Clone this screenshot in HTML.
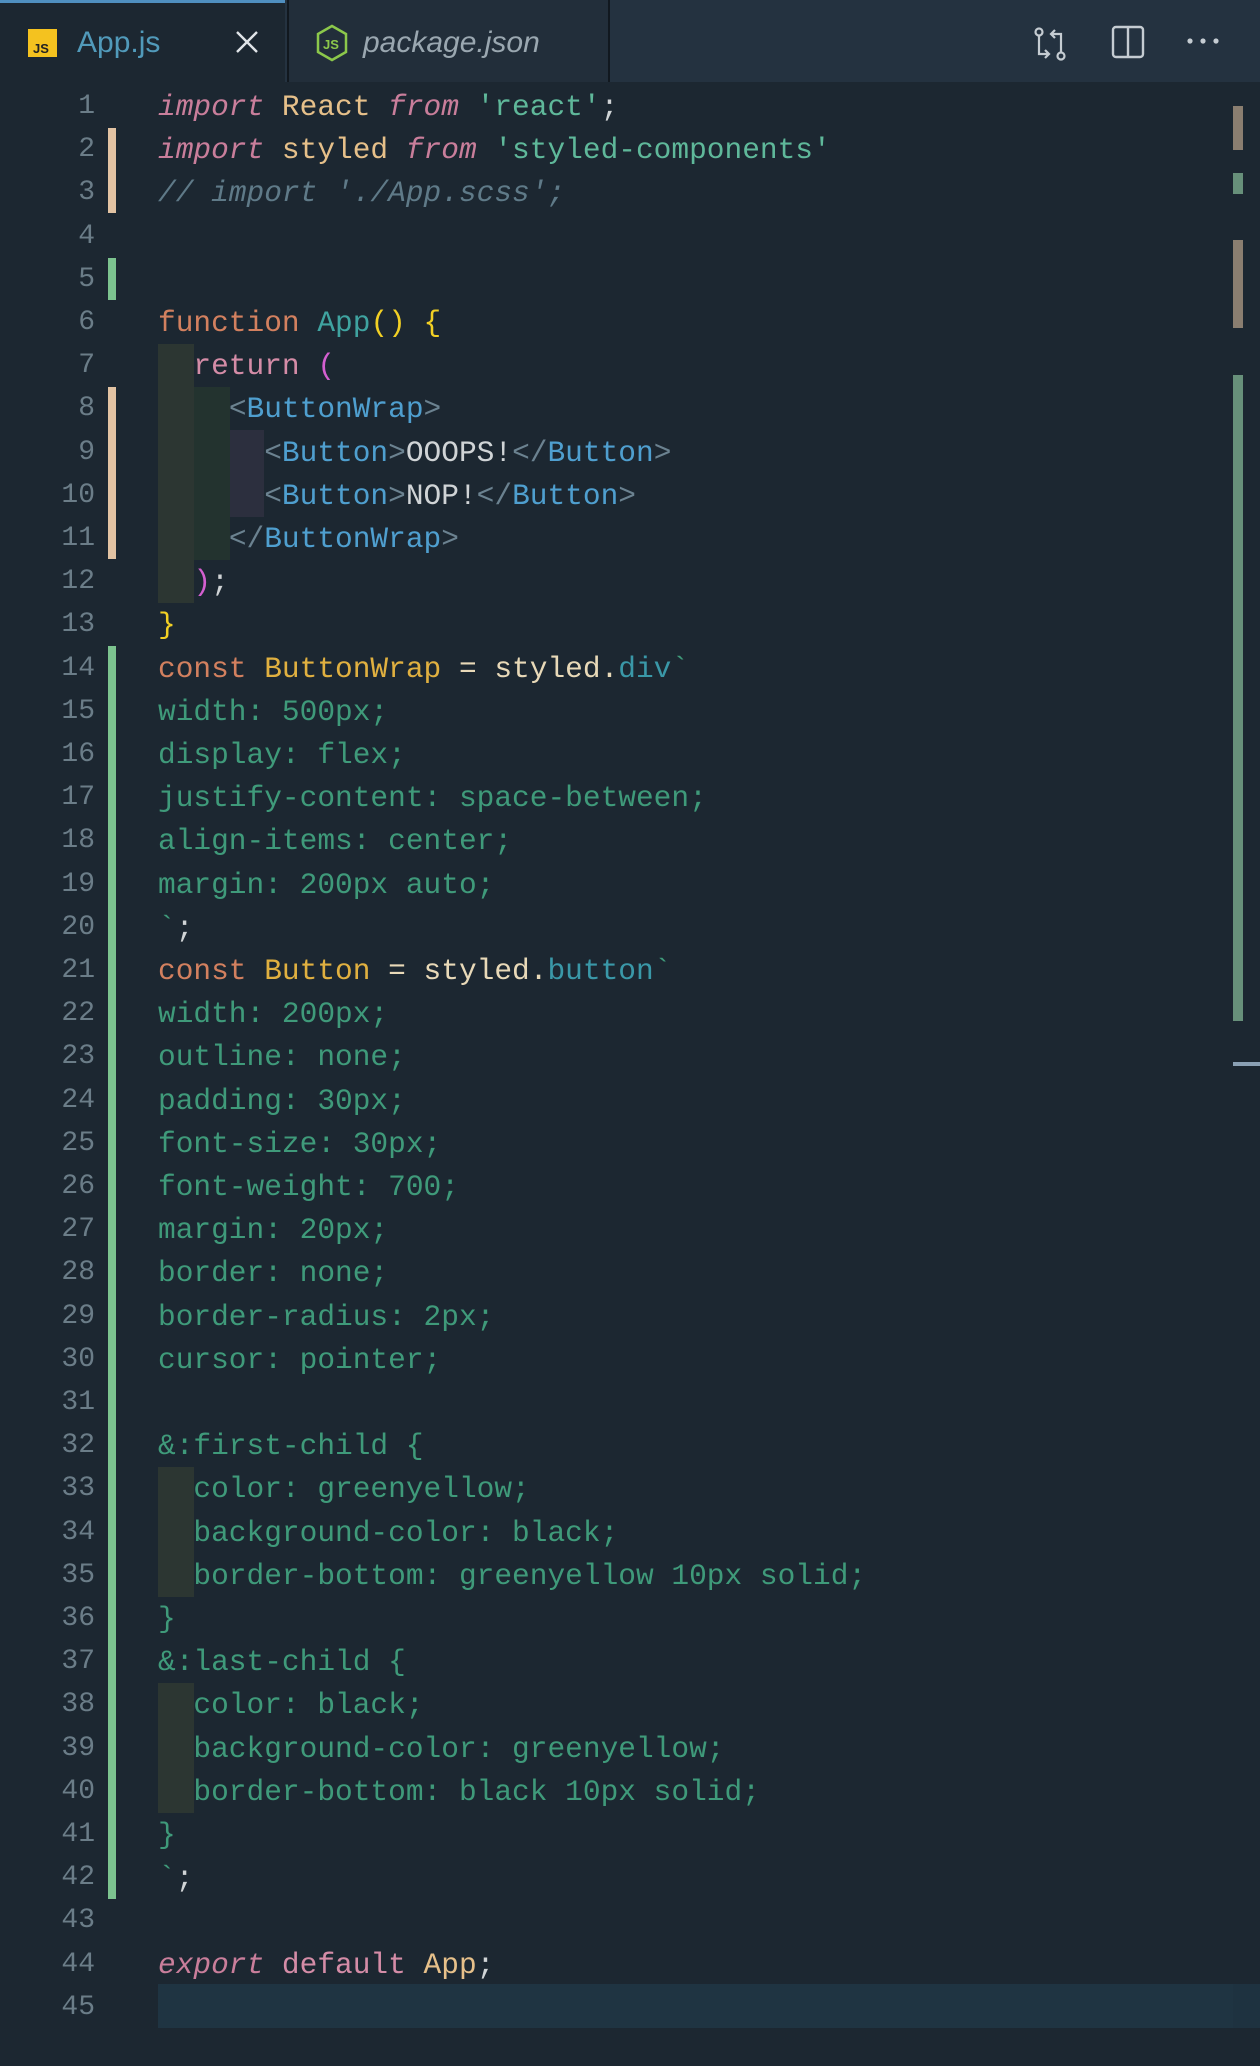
<!DOCTYPE html>
<html><head><meta charset="utf-8"><style>
*{margin:0;padding:0;box-sizing:border-box}
body{width:1260px;height:2066px;background:#1c2731;overflow:hidden;position:relative;font-family:"Liberation Mono",monospace}
.tabbar{position:absolute;left:0;top:0;width:1260px;height:82px;background:#243240}
.tab1{position:absolute;left:0;top:0;width:285px;height:82px;background:#1c2731;border-top:3px solid #4f8fc0}
.tab2{position:absolute;left:287px;top:0;width:323px;height:82px;background:#222e3a;border-left:2px solid #11181f;border-right:2px solid #11181f}
.tt{position:absolute;font-family:"Liberation Sans",sans-serif;font-size:30px;top:26px}
.ln{position:absolute;left:0;width:95px;text-align:right;color:#6b7d88;font-size:28px;line-height:43.2px;height:43.2px}
.cl{position:absolute;left:158px;font-size:29.5px;line-height:43.2px;height:43.2px;white-space:pre;color:#d0d4d6;top:1px}
.bar{position:absolute;left:108px;width:8px}
.ov{position:absolute;left:1233px;width:10px}
.g{position:absolute}
.kw{color:#c97e9b;font-style:italic}
.yl{color:#e6c08a}
.st{color:#5fb89a}
.cm{color:#5f7a88;font-style:italic}
.fn{color:#d2805f}
.ap{color:#3fa3a0}
.py{color:#f2d024}
.rt{color:#d48ca7}
.pp{color:#d45fd0}
.tg{color:#4f9fcf}
.br{color:#6b8290}
.cs{color:#3f9a7a}
.gd{color:#e0b040}
.sy{color:#e8d9b8}
.dv{color:#3a98a8}
</style></head><body>
<div class="tabbar"></div>
<div class="tab1"></div>
<div class="tab2"></div>
<div class="g" style="left:28px;top:29px;width:29px;height:28px;background:#f4c21f"><span style="position:absolute;left:5px;bottom:1px;font:bold 13px 'Liberation Sans',sans-serif;color:#222">JS</span></div>
<div class="tt" style="left:77px;color:#519aba">App.js</div>
<svg class="g" style="left:234px;top:29px" width="26" height="26" viewBox="0 0 26 26"><path d="M3 3L23 23M23 3L3 23" stroke="#e0e4e8" stroke-width="2.4"/></svg>
<svg class="g" style="left:315px;top:24px" width="34" height="38" viewBox="0 0 34 38"><path d="M17 2L31 10V28L17 36L3 28V10Z" fill="none" stroke="#8cc84b" stroke-width="2.5"/><text x="8" y="25" font-family="Liberation Sans" font-size="13" font-weight="bold" fill="#8cc84b">JS</text></svg>
<div class="tt" style="left:363px;color:#9aa7b0;font-style:italic">package.json</div>
<svg class="g" style="left:1030px;top:24px" width="40" height="40" viewBox="0 0 40 40" fill="none" stroke="#c5ccd2" stroke-width="2.2"><circle cx="9" cy="8" r="3.5"/><path d="M9 12V30H19M15 26L19 30L15 34"/><circle cx="31" cy="32" r="3.5"/><path d="M31 28V10H21M25 6L21 10L25 14"/></svg>
<svg class="g" style="left:1110px;top:24px" width="36" height="36" viewBox="0 0 36 36" fill="none" stroke="#c5ccd2" stroke-width="2.4"><rect x="3" y="3" width="30" height="30" rx="3"/><path d="M18 3V33"/></svg>
<svg class="g" style="left:1186px;top:36px" width="34" height="10" viewBox="0 0 34 10" fill="#c5ccd2"><circle cx="4" cy="5" r="2.6"/><circle cx="17" cy="5" r="2.6"/><circle cx="30" cy="5" r="2.6"/></svg>

<div class="g" style="left:158px;top:1984px;width:1075px;height:44px;background:#1f3442"></div>
<div class="g" style="left:1233px;top:1984px;width:27px;height:44px;background:#1e3240"></div>

<div class="g" style="left:158px;top:344px;width:36px;height:259px;background:#2c3632"></div>
<div class="g" style="left:194px;top:387px;width:36px;height:173px;background:#23332f"></div>
<div class="g" style="left:230px;top:430px;width:34px;height:87px;background:#2c2f3e"></div>
<div class="g" style="left:158px;top:1467px;width:36px;height:130px;background:#2c3632"></div>
<div class="g" style="left:158px;top:1683px;width:36px;height:130px;background:#2c3632"></div>

<div class="bar" style="top:128px;height:85px;background:#e2c3a3"></div>
<div class="bar" style="top:258px;height:42px;background:#7cc38f"></div>
<div class="bar" style="top:387px;height:172px;background:#e2c3a3"></div>
<div class="bar" style="top:646px;height:1253px;background:#7cc38f"></div>

<div class="ov" style="top:106px;height:44px;background:#8a7e70"></div>
<div class="ov" style="top:173px;height:21px;background:#67907a"></div>
<div class="ov" style="top:240px;height:88px;background:#8a7e70"></div>
<div class="ov" style="top:375px;height:646px;background:#67907a"></div>
<div class="g" style="left:1233px;top:1062px;width:27px;height:4px;background:#8aa0b4"></div>

<div id="code"></div>
<script>
var L=[
'<span class="kw">import</span> <span class="yl">React</span> <span class="kw">from</span> <span class="st">\'react\'</span>;',
'<span class="kw">import</span> <span class="yl">styled</span> <span class="kw">from</span> <span class="st">\'styled-components\'</span>',
'<span class="cm">// import \'./App.scss\';</span>',
'','',
'<span class="fn">function</span> <span class="ap">App</span><span class="py">() {</span>',
'  <span class="rt">return</span> <span class="pp">(</span>',
'    <span class="br">&lt;</span><span class="tg">ButtonWrap</span><span class="br">&gt;</span>',
'      <span class="br">&lt;</span><span class="tg">Button</span><span class="br">&gt;</span>OOOPS!<span class="br">&lt;/</span><span class="tg">Button</span><span class="br">&gt;</span>',
'      <span class="br">&lt;</span><span class="tg">Button</span><span class="br">&gt;</span>NOP!<span class="br">&lt;/</span><span class="tg">Button</span><span class="br">&gt;</span>',
'    <span class="br">&lt;/</span><span class="tg">ButtonWrap</span><span class="br">&gt;</span>',
'  <span class="pp">)</span>;',
'<span class="py">}</span>',
'<span class="fn">const</span> <span class="gd">ButtonWrap</span> <span class="sy">= styled.</span><span class="dv">div</span><span class="cs">`</span>',
'<span class="cs">width: 500px;</span>',
'<span class="cs">display: flex;</span>',
'<span class="cs">justify-content: space-between;</span>',
'<span class="cs">align-items: center;</span>',
'<span class="cs">margin: 200px auto;</span>',
'<span class="cs">`</span>;',
'<span class="fn">const</span> <span class="gd">Button</span> <span class="sy">= styled.</span><span class="dv">button</span><span class="cs">`</span>',
'<span class="cs">width: 200px;</span>',
'<span class="cs">outline: none;</span>',
'<span class="cs">padding: 30px;</span>',
'<span class="cs">font-size: 30px;</span>',
'<span class="cs">font-weight: 700;</span>',
'<span class="cs">margin: 20px;</span>',
'<span class="cs">border: none;</span>',
'<span class="cs">border-radius: 2px;</span>',
'<span class="cs">cursor: pointer;</span>',
'',
'<span class="cs">&amp;:first-child {</span>',
'<span class="cs">  color: greenyellow;</span>',
'<span class="cs">  background-color: black;</span>',
'<span class="cs">  border-bottom: greenyellow 10px solid;</span>',
'<span class="cs">}</span>',
'<span class="cs">&amp;:last-child {</span>',
'<span class="cs">  color: black;</span>',
'<span class="cs">  background-color: greenyellow;</span>',
'<span class="cs">  border-bottom: black 10px solid;</span>',
'<span class="cs">}</span>',
'<span class="cs">`</span>;',
'',
'<span class="kw">export</span> <span class="rt" style="font-style:normal">default</span> <span class="yl">App</span>;',
''];
var h='';
for(var i=0;i<L.length;i++){var t=85+i*43.2;h+='<div class="ln" style="top:'+t+'px">'+(i+1)+'</div><div class="cl" style="top:'+(t+1)+'px">'+L[i]+'</div>';}
document.getElementById('code').innerHTML=h;
</script>
</body></html>
